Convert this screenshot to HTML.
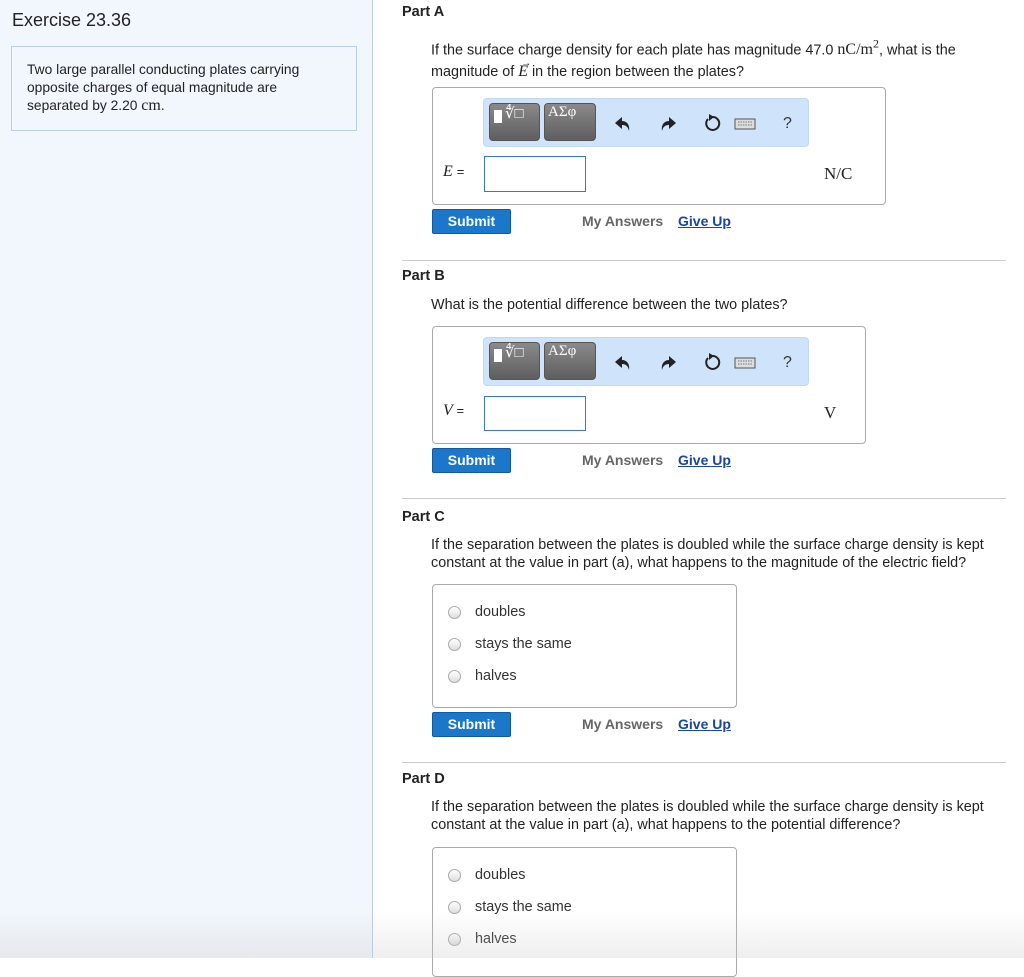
<!DOCTYPE html>
<html><head><meta charset="utf-8">
<style>
*{margin:0;padding:0;box-sizing:border-box}
body{width:1024px;height:958px;overflow:hidden;position:relative;background:#fff;font-family:"Liberation Sans",Arial,sans-serif;font-size:14.4px;color:#333}
.abs{position:absolute}
.left{left:0;top:0;width:373px;height:958px;background:#f2f7fd;border-right:1px solid #b9cde3}
.m{font-family:"Liberation Serif",serif}
.hdr{font-weight:bold;font-size:14.5px;color:#222}
.sep{left:402px;width:604px;height:1px;background:#ccc}
.ansbox{border:1px solid #aaa;border-radius:4px;background:#fff}
.tb{background:#cfe3fb;border-radius:4px;border:1px solid #c2d8f2}
.btn{background:linear-gradient(#8a8a8a,#5e5e5e);border-radius:4px;border:1px solid #555;color:#fff}
.inp{border:1px solid #3a74d6;background:#fff}
.submit{background:#1a77c9;border:1px solid #0f5a9e;border-radius:2px;color:#fff;font-weight:bold;font-size:14px;text-align:center;line-height:23px;width:79px;height:25px}
.my{color:#666;font-weight:bold;font-size:14px}
.gu{color:#1745a0;font-weight:bold;font-size:14px;text-decoration:underline}
.radio{width:13px;height:13px;border-radius:50%;border:1px solid #aaa;background:linear-gradient(#fff,#ddd)}
</style></head><body>
<div class="abs left"></div>
<div class="abs" style="left:12px;top:10px;font-size:18px;color:#222">Exercise 23.36</div>
<div class="abs" style="left:11px;top:46px;width:346px;height:85px;border:1px solid #b9cde3;background:#f2f7fd"></div>
<div class="abs" style="left:27px;top:61px;line-height:18px;color:#222;font-size:13.8px">Two large parallel conducting plates carrying<br>opposite charges of equal magnitude are<br>separated by 2.20 <span class="m" style="font-size:16px">cm</span>.</div>

<!-- Part A -->
<div class="abs hdr" style="left:402px;top:4px">Part A</div>
<div class="abs" style="left:431px;top:33px;line-height:22px;color:#222">If the surface charge density for each plate has magnitude 47.0 <span class="m" style="font-size:16px">nC/m<sup style="font-size:12px">2</sup></span>, what is the<br>magnitude of <span class="m" style="font-size:16px;font-style:italic;position:relative">E<span style="position:absolute;left:3px;top:-10px;font-size:10px;font-style:normal">→</span></span> in the region between the plates?</div>

<!-- Part A box -->
<div class="abs ansbox" style="left:432px;top:87px;width:454px;height:118px"></div>
<div class="abs tb" style="left:483px;top:98px;width:326px;height:49px"></div>
<div class="abs btn" style="left:489px;top:103px;width:51px;height:38px"><div class="abs" style="left:4px;top:6px;width:8px;height:13px;background:#fff"></div><div class="abs m" style="left:15px;top:0;font-size:15px">∜□</div></div>
<div class="abs btn" style="left:544px;top:103px;width:52px;height:38px"><div class="abs m" style="left:3px;top:0;font-size:15px">ΑΣφ</div></div>
<svg class="abs" style="left:612px;top:114px" width="200" height="20" viewBox="0 0 200 20">
<path d="M10 3 L3 9 L10 15 V11 C14 11 16 13 17 17 C18 11 15 7 10 7 Z" fill="#222"/>
<path d="M57 3 L64 9 L57 15 V11 C53 11 51 13 50 17 C49 11 52 7 57 7 Z" fill="#222"/>
<path d="M96 5 A6.5 6.5 0 1 0 100 3" fill="none" stroke="#222" stroke-width="2"/><path d="M97 0 L102 3 L97 7 Z" fill="#222"/>
<rect x="123" y="5" width="20" height="10" fill="#ddd" stroke="#555"/><path d="M126 8h14M126 11h14" stroke="#777" stroke-dasharray="1.5 1"/>
</svg>
<div class="abs" style="left:783px;top:115px;font-size:16px;color:#333">?</div>
<div class="abs m" style="left:443px;top:163px;font-size:16px;font-style:italic;color:#222">E <span style="font-style:normal;font-family:'Liberation Sans';font-size:13px">=</span></div>
<div class="abs inp" style="left:484px;top:156px;width:102px;height:36px"></div>
<div class="abs m" style="left:824px;top:164px;font-size:17px;color:#222">N/C</div>
<div class="abs submit" style="left:432px;top:209px">Submit</div>
<div class="abs my" style="left:582px;top:213px">My Answers</div>
<div class="abs gu" style="left:678px;top:213px">Give Up</div>
<div class="abs sep" style="top:260px"></div>

<!-- Part B -->
<div class="abs hdr" style="left:402px;top:268px">Part B</div>
<div class="abs" style="left:431px;top:297px;color:#222">What is the potential difference between the two plates?</div>
<div class="abs ansbox" style="left:432px;top:326px;width:434px;height:118px"></div>
<div class="abs tb" style="left:483px;top:337px;width:326px;height:49px"></div>
<div class="abs btn" style="left:489px;top:342px;width:51px;height:38px"><div class="abs" style="left:4px;top:6px;width:8px;height:13px;background:#fff"></div><div class="abs m" style="left:15px;top:0;font-size:15px">∜□</div></div>
<div class="abs btn" style="left:544px;top:342px;width:52px;height:38px"><div class="abs m" style="left:3px;top:0;font-size:15px">ΑΣφ</div></div>
<svg class="abs" style="left:612px;top:353px" width="200" height="20" viewBox="0 0 200 20">
<path d="M10 3 L3 9 L10 15 V11 C14 11 16 13 17 17 C18 11 15 7 10 7 Z" fill="#222"/>
<path d="M57 3 L64 9 L57 15 V11 C53 11 51 13 50 17 C49 11 52 7 57 7 Z" fill="#222"/>
<path d="M96 5 A6.5 6.5 0 1 0 100 3" fill="none" stroke="#222" stroke-width="2"/><path d="M97 0 L102 3 L97 7 Z" fill="#222"/>
<rect x="123" y="5" width="20" height="10" fill="#ddd" stroke="#555"/><path d="M126 8h14M126 11h14" stroke="#777" stroke-dasharray="1.5 1"/>
</svg>
<div class="abs" style="left:783px;top:354px;font-size:16px;color:#333">?</div>
<div class="abs m" style="left:443px;top:402px;font-size:16px;font-style:italic;color:#222">V <span style="font-style:normal;font-family:'Liberation Sans';font-size:13px">=</span></div>
<div class="abs inp" style="left:484px;top:396px;width:102px;height:35px"></div>
<div class="abs m" style="left:824px;top:403px;font-size:17px;color:#222">V</div>
<div class="abs submit" style="left:432px;top:448px">Submit</div>
<div class="abs my" style="left:582px;top:452px">My Answers</div>
<div class="abs gu" style="left:678px;top:452px">Give Up</div>
<div class="abs sep" style="top:498px"></div>

<!-- Part C -->
<div class="abs hdr" style="left:402px;top:509px">Part C</div>
<div class="abs" style="left:431px;top:536px;line-height:18px;color:#222">If the separation between the plates is doubled while the surface charge density is kept<br>constant at the value in part (a), what happens to the magnitude of the electric field?</div>
<div class="abs ansbox" style="left:432px;top:584px;width:305px;height:124px"></div>
<div class="abs radio" style="left:448px;top:606px"></div><div class="abs" style="left:475px;top:604px">doubles</div>
<div class="abs radio" style="left:448px;top:638px"></div><div class="abs" style="left:475px;top:636px">stays the same</div>
<div class="abs radio" style="left:448px;top:670px"></div><div class="abs" style="left:475px;top:668px">halves</div>
<div class="abs submit" style="left:432px;top:712px">Submit</div>
<div class="abs my" style="left:582px;top:716px">My Answers</div>
<div class="abs gu" style="left:678px;top:716px">Give Up</div>
<div class="abs sep" style="top:762px"></div>

<!-- Part D -->
<div class="abs hdr" style="left:402px;top:771px">Part D</div>
<div class="abs" style="left:431px;top:798px;line-height:18px;color:#222">If the separation between the plates is doubled while the surface charge density is kept<br>constant at the value in part (a), what happens to the potential difference?</div>
<div class="abs ansbox" style="left:432px;top:847px;width:305px;height:130px"></div>
<div class="abs radio" style="left:448px;top:869px"></div><div class="abs" style="left:475px;top:867px">doubles</div>
<div class="abs radio" style="left:448px;top:901px"></div><div class="abs" style="left:475px;top:899px">stays the same</div>
<div class="abs radio" style="left:448px;top:933px"></div><div class="abs" style="left:475px;top:931px">halves</div>

<div class="abs" style="left:0;top:910px;width:1024px;height:48px;background:linear-gradient(rgba(200,200,200,0),rgba(200,200,200,0.3))"></div>
</body></html>
